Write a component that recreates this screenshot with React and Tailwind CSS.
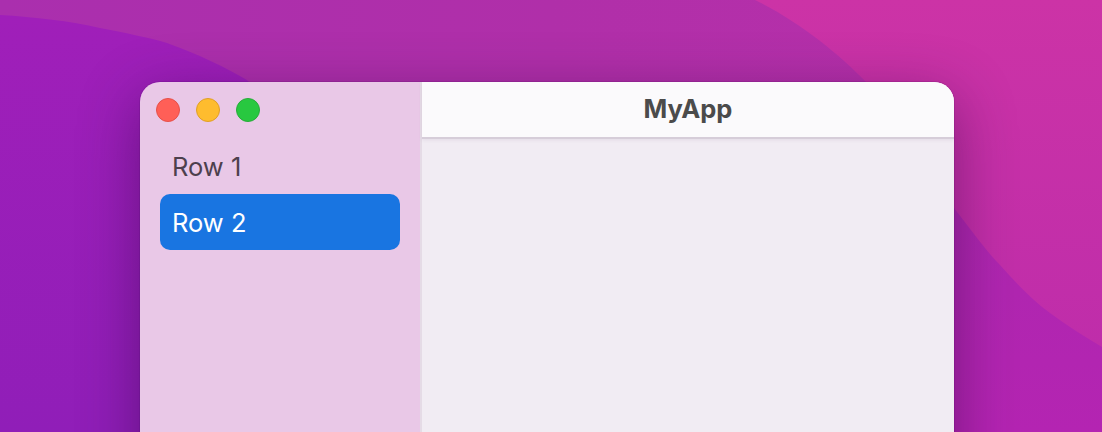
import React from "react";

const rows = ["Row 1", "Row 2"];
const selected = "Row 2";

// wallpaper waves behind the window
const Wallpaper = () => (
  <svg
    className="absolute inset-0 h-full w-full"
    viewBox="0 0 1102 432"
    preserveAspectRatio="none"
  >
    <defs>
      <linearGradient id="base" x1="0" y1="0" x2="1" y2="0">
        <stop offset="0" stopColor="#aa2fae" />
        <stop offset="0.5" stopColor="#b02fa9" />
        <stop offset="1" stopColor="#b930aa" />
      </linearGradient>
      <linearGradient id="left" x1="0" y1="0" x2="0" y2="1">
        <stop offset="0" stopColor="#a01fb9" />
        <stop offset="1" stopColor="#901eb8" />
      </linearGradient>
      <linearGradient id="right" x1="0" y1="0" x2="0" y2="1">
        <stop offset="0" stopColor="#cc33a6" />
        <stop offset="1" stopColor="#bf2daa" />
      </linearGradient>
      <linearGradient id="lower" x1="0" y1="0" x2="0" y2="1">
        <stop offset="0" stopColor="#ac28ae" />
        <stop offset="1" stopColor="#b424b2" />
      </linearGradient>
    </defs>
    <rect width="1102" height="432" fill="url(#base)" />
    <path
      d="M0 15C35 17 70 21 100 28C125 33 147 37 167 43C200 55 225 67 247 80C300 130 340 300 360 432H0Z"
      fill="url(#left)"
    />
    <rect x="900" y="150" width="202" height="282" fill="url(#lower)" />
    <path
      d="M755 0C800 22 840 55 866 82C900 120 930 165 954 208C970 228 985 250 1000 265C1015 282 1032 300 1050 313C1068 326 1085 337 1102 347V0Z"
      fill="url(#right)"
    />
  </svg>
);

const TrafficLights = () => (
  <div className="flex h-14 items-center gap-4 pl-4">
    <span className="h-6 w-6 rounded-full border border-[#e5504a] bg-[#ff5f57]" />
    <span className="h-6 w-6 rounded-full border border-[#df9f27] bg-[#febc2e]" />
    <span className="h-6 w-6 rounded-full border border-[#28ab3a] bg-[#28c840]" />
  </div>
);

const Sidebar = () => (
  <div className="flex w-[282px] shrink-0 flex-col border-r-2 border-[#e5dbe6] bg-[#e9c8e7]">
    <TrafficLights />
    <div className="flex flex-col px-5">
      {rows.map((row) => (
        <div
          key={row}
          className={`flex h-14 items-center rounded-[10px] px-3 pt-[2px] text-[25.5px] ${
            row === selected ? "bg-[#1975e1] text-white" : "text-[#4d404d]"
          }`}
        >
          {row}
        </div>
      ))}
    </div>
  </div>
);

export default function App() {
  return (
    <div className="relative h-[432px] w-[1102px] overflow-hidden font-['Inter',sans-serif]">
      <Wallpaper />
      <div className="relative flex h-full pl-[140px] pt-[82px]">
        <div className="flex h-[500px] w-[814px] overflow-hidden rounded-t-[20px] shadow-[0_0_0_1px_rgba(60,0,80,0.12),0_16px_60px_rgba(40,0,60,0.45)]">
          <Sidebar />
          <div className="flex flex-1 flex-col bg-[#f1ecf3]">
            <div className="flex h-[57px] items-center justify-center border-b-2 border-[#d6cdd9] bg-[#fbfafc] text-[25.5px] font-bold text-[#4b4b4b] shadow-[0_1px_4px_rgba(60,0,80,0.08)]">
              MyApp
            </div>
          </div>
        </div>
      </div>
    </div>
  );
}
